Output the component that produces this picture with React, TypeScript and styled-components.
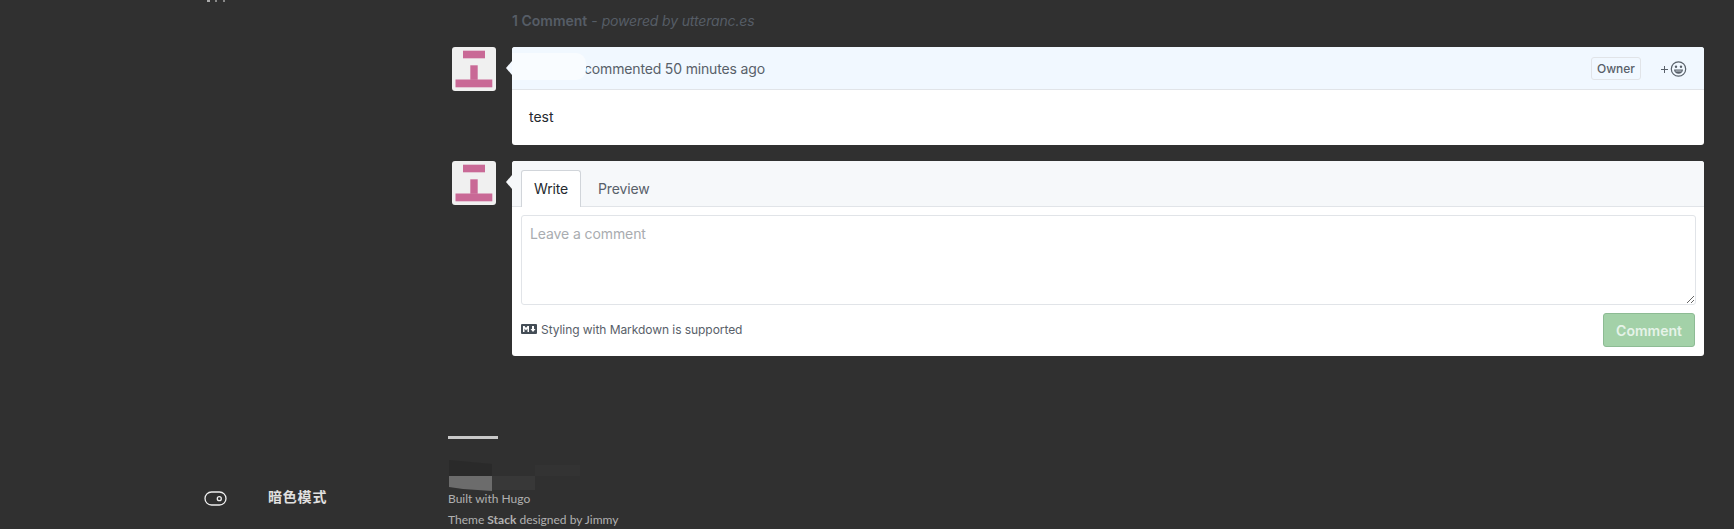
import React from "react";
import styled, { createGlobalStyle } from "styled-components";

const Global = createGlobalStyle`
  html, body { margin: 0; padding: 0; background: #303030; }
  body { font-family: Inter, "Liberation Sans", sans-serif; }
`;

const Page = styled.div`
  display: grid;
  grid-template-columns: 448px 1fr;
  height: 529px;
  overflow: hidden;
  background: #303030;
`;

const Sidebar = styled.aside`
  display: flex;
  flex-direction: column;
  justify-content: space-between;
  padding: 0 0 20px 204px;
`;

const MenuStub = styled.svg`
  display: block;
  width: 24px;
  height: 3px;
`;

const ThemeToggle = styled.div`
  display: flex;
  align-items: center;
  gap: 40px;
  color: #e0e0e0;
  font: 700 14px "Noto Sans CJK SC", "Noto Sans", sans-serif;
  letter-spacing: 0.8px;
  height: 24px;
`;

const ToggleLabel = styled.span`
  padding-bottom: 4px;
`;

const Main = styled.main`
  display: flex;
  flex-direction: column;
  min-width: 0;
`;

const Thread = styled.section`
  display: flex;
  flex-direction: column;
  padding: 0 30px 0 4px;
`;

const CountLine = styled.div`
  height: 47px;
  padding: 12px 0 0 60px;
  box-sizing: border-box;
  font-size: 14px;
  line-height: 17px;
  color: #565d66;
`;

const CountStrong = styled.strong`
  font-weight: 600;
`;

const Powered = styled.em`
  font-style: italic;
  letter-spacing: -0.15px;
`;

const Entry = styled.article`
  display: flex;
  gap: 16px;
  margin-bottom: 16px;
`;

const Avatar = styled.svg`
  flex: none;
  width: 44px;
  height: 44px;
  border-radius: 3px;
  display: block;
`;

const Card = styled.div<{ $fill: string }>`
  position: relative;
  flex: 1;
  min-width: 0;
  background: #fff;
  border-radius: 3px;
  &::before {
    content: "";
    position: absolute;
    left: -6px;
    top: 14px;
    border-style: solid;
    border-width: 7px 6px 7px 0;
    border-color: transparent ${(p) => p.$fill} transparent transparent;
  }
`;

const CardHeader = styled.header`
  display: flex;
  align-items: center;
  height: 43px;
  box-sizing: border-box;
  padding: 0 17px 0 72px;
  background: #f1f8ff;
  border-bottom: 1px solid #e1e4e8;
  border-radius: 3px 3px 0 0;
  font-size: 14px;
  color: #586069;
  position: relative;
`;

const NameMask = styled.span`
  position: absolute;
  left: 0;
  top: 6px;
  width: 74px;
  height: 27px;
  border-radius: 0 10px 10px 0;
  background: #f9fcff;
`;

const Byline = styled.span`
  flex: 1;
  letter-spacing: -0.16px;
`;

const OwnerBadge = styled.span`
  font-size: 12px;
  font-weight: 500;
  line-height: 21px;
  padding: 0 5px;
  border: 1px solid #e1e4e8;
  border-radius: 3px;
  margin-right: 19px;
`;

const ReactionIcon = styled.svg`
  display: block;
  width: 27px;
  height: 16px;
  margin-top: 1px;
  color: #586069;
`;

const CardBody = styled.div`
  padding: 15px 17px;
  height: 55px;
  box-sizing: border-box;
  font-size: 14px;
  line-height: 24px;
  color: #24292e;
`;

const TabBar = styled.div`
  display: flex;
  gap: 4px;
  height: 46px;
  box-sizing: border-box;
  padding: 9px 8px 0 9px;
  background: #f6f8fa;
  border-bottom: 1px solid #e1e4e8;
  border-radius: 3px 3px 0 0;
`;

const Tab = styled.button<{ $active?: boolean }>`
  height: 37px;
  flex: none;
  box-sizing: border-box;
  padding: 0 12px 2px;
  font: 14px Inter, sans-serif;
  letter-spacing: -0.15px;
  color: ${(p) => (p.$active ? "#24292e" : "#586069")};
  background: ${(p) => (p.$active ? "#fff" : "transparent")};
  border: 1px solid ${(p) => (p.$active ? "#d1d5da" : "transparent")};
  border-bottom: 0;
  border-radius: 3px 3px 0 0;
`;

const Editor = styled.div`
  padding: 8px 8px 0 9px;
`;

const TextBox = styled.textarea`
  display: block;
  width: 100%;
  height: 90px;
  box-sizing: border-box;
  padding: 8px;
  font: 14px/20px Inter, sans-serif;
  letter-spacing: -0.1px;
  border: 1px solid #e1e4e8;
  border-radius: 3px;
  background: #fff;
  outline: none;
  &::placeholder { color: #a9acb0; }
`;

const EditorFoot = styled.div`
  display: flex;
  justify-content: space-between;
  align-items: center;
  padding: 8px 9px 9px;
`;

const MdHint = styled.span`
  display: flex;
  align-items: center;
  gap: 4px;
  padding-bottom: 2px;
  font-size: 12px;
  letter-spacing: -0.06px;
  color: #586069;
`;

const MdIcon = styled.svg`
  display: block;
  width: 16px;
  height: 10px;
  color: #444d56;
`;

const SubmitButton = styled.button`
  width: 92px;
  height: 34px;
  font: 600 14px Inter, sans-serif;
  color: #e6f3e8;
  background: #a3d1a8;
  border: 1px solid #8dbb94;
  border-radius: 3px;
`;

const Footer = styled.footer`
  margin: 64px 0 0;
  color: #b0b0b0;
  font: 12px/21px Lato, sans-serif;
`;

const Rule = styled.div`
  width: 50px;
  height: 3px;
  background: #c9c9c9;
  margin-bottom: 21px;
`;

const Redaction = styled.svg`
  display: block;
  width: 140px;
  height: 31px;
  margin-bottom: -3px;
`;

const Tally = styled.strong`
  font-weight: 700;
`;

const FootLine = styled.div``;

const Identicon = () => (
  <Avatar viewBox="0 0 44 44">
    <rect width="44" height="44" fill="#f0f0f0" />
    <rect x="11" y="3.7" width="22" height="7.6" fill="#c96996" />
    <rect x="18.300" y="18.300" width="7.400" height="14.500" fill="#c96996" />
    <rect x="3.500" y="32.500" width="36.800" height="7.800" fill="#c96996" />
  </Avatar>
);

export default function App() {
  return (
    <Page>
      <Global />
      <Sidebar>
        <MenuStub viewBox="0 0 24 3">
          <rect x="3" y="0" width="3" height="2" fill="#aaa" />
          <rect x="11" y="0" width="2" height="2" fill="#888" />
          <rect x="19" y="0" width="2" height="2" fill="#888" />
        </MenuStub>
        <ThemeToggle>
          <svg width="24" height="24" viewBox="0 0 24 24" fill="none" stroke="#eee" strokeWidth="1.3">
            <rect x="1" y="6" width="21" height="13" rx="6.5" />
            <circle cx="15.300" cy="12.700" r="2" />
          </svg>
          <ToggleLabel>暗色模式</ToggleLabel>
        </ThemeToggle>
      </Sidebar>
      <Main>
        <Thread>
          <CountLine>
            <CountStrong>1 Comment</CountStrong> - <Powered>powered by utteranc.es</Powered>
          </CountLine>
          <Entry>
            <Identicon />
            <Card $fill="#f4f9ff">
              <CardHeader>
                <NameMask />
                <Byline>commented 50 minutes ago</Byline>
                <OwnerBadge>Owner</OwnerBadge>
                <ReactionIcon viewBox="0 0 27 16" fill="none" stroke="currentColor">
                  <path d="M1 8.500h7M4.500 5v7" strokeWidth="1" />
                  <circle cx="18.500" cy="8" r="7.200" strokeWidth="1.200" />
                  <circle cx="16" cy="5.800" r="1.200" fill="currentColor" stroke="none" />
                  <circle cx="21" cy="5.800" r="1.200" fill="currentColor" stroke="none" />
                  <path d="M14 8.500h9c0 2.500-2 4.300-4.500 4.300S14 11 14 8.500z" fill="currentColor" stroke="none" />
                  <path d="M15.500 10h6" stroke="#f1f8ff" strokeWidth="0.7" />
                </ReactionIcon>
              </CardHeader>
              <CardBody>test</CardBody>
            </Card>
          </Entry>
          <Entry>
            <Identicon />
            <Card $fill="#f6f8fa">
              <TabBar>
                <Tab $active>Write</Tab>
                <Tab>Preview</Tab>
              </TabBar>
              <Editor>
                <TextBox placeholder="Leave a comment" />
              </Editor>
              <EditorFoot>
                <MdHint>
                  <MdIcon viewBox="0 0 16 10">
                    <path fill="currentColor" fillRule="evenodd" d="M1 0h14a1 1 0 0 1 1 1v8a1 1 0 0 1-1 1H1a1 1 0 0 1-1-1V1a1 1 0 0 1 1-1zM2 8V2h1.600L5 4l1.400-2H8v6H6.500V4.500L5 6.500l-1.500-2V8zM11 2h2v3h1.500l-2.500 3-2.500-3H11z" />
                  </MdIcon>
                  Styling with Markdown is supported
                </MdHint>
                <SubmitButton>Comment</SubmitButton>
              </EditorFoot>
            </Card>
          </Entry>
        </Thread>
        <Footer>
          <Rule />
          <Redaction viewBox="0 0 140 31">
            <polygon points="44,5 87,5 87,16 132,16 132,5 44,5" fill="#333" />
            <polygon points="1,0 44,4 44,16 1,16" fill="#2a2a2a" />
            <polygon points="1,16 44,16 44,31 15,29 1,27" fill="#6c6c6c" />
            <rect x="44" y="16" width="43" height="14" fill="#383838" />
          </Redaction>
          <FootLine>Built with Hugo</FootLine>
          <FootLine>Theme <Tally>Stack</Tally> designed by Jimmy</FootLine>
        </Footer>
      </Main>
    </Page>
  );
}
